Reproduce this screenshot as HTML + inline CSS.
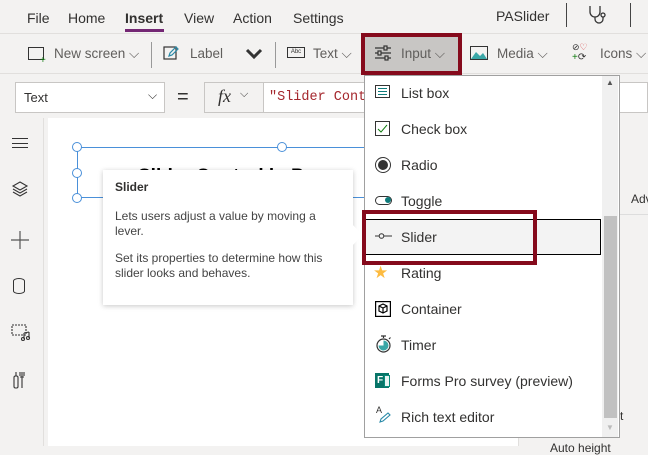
<!DOCTYPE html>
<html><head><meta charset="utf-8"><style>
*{margin:0;padding:0;box-sizing:border-box}
body{width:648px;height:446px;overflow:hidden;position:relative;background:#f3f2f1;font-family:"Liberation Sans",sans-serif;color:#323130}
.a{position:absolute}
.t{position:absolute;font-size:13.5px;white-space:nowrap}
.g{color:#605e5c}
</style></head><body>
<div class="a" style="left:0;top:0;width:648px;height:34px;background:#f3f2f1;border-bottom:1px solid #e1dfdd"></div>
<div class="t" style="left:27px;top:10px;font-size:14px">File</div>
<div class="t" style="left:68px;top:10px;font-size:14px">Home</div>
<div class="t" style="left:125px;top:10px;font-size:14px;font-weight:bold">Insert</div>
<div class="a" style="left:125px;top:29px;width:39px;height:3px;background:#742774"></div>
<div class="t" style="left:184px;top:10px;font-size:14px">View</div>
<div class="t" style="left:233px;top:10px;font-size:14px">Action</div>
<div class="t" style="left:293px;top:10px;font-size:14px">Settings</div>
<div class="t" style="left:496px;top:8px;font-size:14px">PASlider</div>
<div class="a" style="left:566px;top:3px;width:1px;height:24px;background:#444"></div>
<svg class="a" style="left:588px;top:5px" width="22" height="20" viewBox="0 0 22 20" fill="none" stroke="#333" stroke-width="1.3"><path d="M2 1v6a5 5 0 0 0 10 0V1M7 12v2a4 4 0 0 0 8 0v-2"/><circle cx="15" cy="10" r="2"/></svg>
<div class="a" style="left:630px;top:3px;width:1px;height:24px;background:#444"></div>
<div class="a" style="left:0;top:35px;width:648px;height:39px;background:#f3f2f1;border-bottom:1px solid #e1dfdd"></div>
<div class="a" style="left:28px;top:47px;width:16px;height:13px;border:1.3px solid #333"></div>
<div class="t" style="left:40px;top:55px;color:#107c10;font-size:10px">+</div>
<div class="t g" style="left:54px;top:46px">New screen ⌵</div>
<div class="a" style="left:151px;top:42px;width:1px;height:26px;background:#999"></div>
<svg class="a" style="left:163px;top:45px" width="16" height="16" viewBox="0 0 16 16" fill="none" stroke="#333" stroke-width="1.2"><rect x="1" y="2" width="12" height="12"/><path d="M6 11l1-3 6-6 2 2-6 6z" stroke="#2a8aa8"/></svg>
<div class="t g" style="left:190px;top:46px">Label</div>
<svg class="a" style="left:245px;top:48px" width="18" height="12" viewBox="0 0 18 12"><path d="M2 2l7 7 7-7" stroke="#333" stroke-width="3" fill="none"/></svg>
<div class="a" style="left:275px;top:42px;width:1px;height:26px;background:#999"></div>
<div class="a" style="left:287px;top:47px;width:18px;height:11px;border:1px solid #333;font-size:6px;text-align:center;line-height:9px">Abc</div>
<div class="t g" style="left:313px;top:46px">Text ⌵</div>
<div class="a" style="left:361px;top:33px;width:101px;height:42px;background:#c8c6c4;border:4px solid #850a1c"></div>
<svg class="a" style="left:374px;top:45px" width="18" height="16" viewBox="0 0 18 16" stroke="#333" stroke-width="1.2" fill="#c8c6c4"><path d="M1 3h16M1 8h16M1 13h16"/><rect x="10" y="1" width="3" height="4"/><rect x="4" y="6" width="3" height="4"/><rect x="11" y="11" width="3" height="4"/></svg>
<div class="t g" style="left:401px;top:46px">Input ⌵</div>
<svg class="a" style="left:470px;top:46px" width="18" height="14" viewBox="0 0 18 14"><rect x="0.5" y="0.5" width="17" height="13" fill="none" stroke="#333"/><path d="M1 13l5-7 4 4 3-3 4 6z" fill="#3aa7a7"/></svg>
<div class="t g" style="left:497px;top:46px">Media ⌵</div>
<div class="t" style="left:572px;top:42px;font-size:9px;color:#333">⊘<span style="color:#d13438">♡</span></div>
<div class="t" style="left:572px;top:52px;font-size:10px;color:#107c10">+<span style="color:#333">⟳</span></div>
<div class="t g" style="left:600px;top:46px">Icons ⌵</div>
<div class="a" style="left:15px;top:82px;width:150px;height:31px;background:#fff;border:1px solid #c8c6c4"></div>
<div class="t" style="left:24px;top:90px;font-size:13px">Text</div>
<div class="t" style="left:148px;top:88px;font-size:12px">⌵</div>
<div class="t" style="left:177px;top:86px;font-size:20px">=</div>
<div class="a" style="left:204px;top:82px;width:60px;height:31px;background:#f3f2f1;border:1px solid #c8c6c4"></div>
<div class="t" style="left:218px;top:86px;font-family:'Liberation Serif',serif;font-style:italic;font-size:18px">fx</div>
<div class="t" style="left:240px;top:88px;font-size:11px">⌵</div>
<div class="a" style="left:263px;top:82px;width:385px;height:31px;background:#fff;border:1px solid #c8c6c4"></div>
<div class="t" style="left:269px;top:90px;font-family:'Liberation Mono',monospace;font-size:13.5px;color:#a4262c">"Slider Cont</div>
<div class="a" style="left:0;top:118px;width:44px;height:328px;background:#f3f2f1;border-right:1px solid #e1dfdd"></div>
<div class="a" style="left:48px;top:118px;width:470px;height:328px;background:#fff"></div>
<div class="a" style="left:518px;top:118px;width:130px;height:328px;background:#f3f2f1;border-left:1px solid #e1dfdd"></div>
<div class="a" style="left:518px;top:214px;width:130px;height:1px;background:#ddd"></div>
<div class="t" style="left:631px;top:192px;font-size:12px">Adv</div>
<div class="t" style="left:620px;top:409px;font-size:12px">t</div>
<div class="t" style="left:550px;top:441px;font-size:12px">Auto height</div>
<div class="a" style="left:12px;top:138px;width:16px;height:10px;border-top:1px solid #333;border-bottom:1px solid #333"></div>
<div class="a" style="left:12px;top:143px;width:16px;height:1px;background:#333"></div>
<svg class="a" style="left:11px;top:181px" width="18" height="16" viewBox="0 0 18 16" fill="none" stroke="#333" stroke-width="1.1"><path d="M9 1l7 4-7 4-7-4z"/><path d="M2 8l7 4 7-4M2 11l7 4 7-4"/></svg>
<svg class="a" style="left:10px;top:230px" width="20" height="20"><path d="M10 1v18M1 10h18" stroke="#555" stroke-width="1.2"/></svg>
<div class="a" style="left:13px;top:278px;width:12px;height:16px;border:1.2px solid #333;border-radius:6px/3px"></div>
<svg class="a" style="left:11px;top:324px" width="20" height="18" fill="none" stroke="#333" stroke-width="1.1"><rect x="1" y="1" width="14" height="10" stroke-dasharray="2 1"/><path d="M13 9v6M18 8v6M13 9l5-1"/><circle cx="12" cy="15" r="1.5"/><circle cx="17" cy="14" r="1.5"/></svg>
<svg class="a" style="left:13px;top:371px" width="14" height="18" fill="none" stroke="#333" stroke-width="1.1"><rect x="1" y="5" width="4" height="12" rx="1.5"/><path d="M3 1v4M9 1v16M7 6h4M11 1v4M7 1v4"/></svg>
<div class="a" style="left:77px;top:147px;width:300px;height:51px;border:1.3px solid #4a90d9;border-right:none"></div>
<div class="t" style="left:138px;top:166px;font-size:19px;font-weight:bold;color:#000">Slider Control in Power</div>
<div class="a" style="left:72px;top:142px;width:10px;height:10px;border:1.5px solid #4a90d9;border-radius:50%;background:#fff"></div>
<div class="a" style="left:277px;top:142px;width:10px;height:10px;border:1.5px solid #4a90d9;border-radius:50%;background:#fff"></div>
<div class="a" style="left:72px;top:168px;width:10px;height:10px;border:1.5px solid #4a90d9;border-radius:50%;background:#fff"></div>
<div class="a" style="left:72px;top:193px;width:10px;height:10px;border:1.5px solid #4a90d9;border-radius:50%;background:#fff"></div>
<div class="a" style="left:103px;top:170px;width:250px;height:135px;background:#fff;box-shadow:0 1px 5px rgba(0,0,0,.22)"></div>
<div class="a" style="left:346px;top:228px;width:14px;height:14px;background:#fff;transform:rotate(45deg)"></div>
<div class="t" style="left:115px;top:180px;font-size:12px;font-weight:bold">Slider</div>
<div class="a" style="left:115px;top:209px;width:225px;font-size:12px;line-height:15px;color:#444">Lets users adjust a value by moving a lever.</div>
<div class="a" style="left:115px;top:251px;width:225px;font-size:12px;line-height:15px;color:#444">Set its properties to determine how this slider looks and behaves.</div>
<div class="a" style="left:364px;top:75px;width:256px;height:363px;background:#fff;border:1px solid #a0a0a0"></div>
<div class="a" style="left:602px;top:76px;width:16px;height:361px;background:#f0f0f0"></div>
<div class="a" style="left:604px;top:216px;width:13px;height:202px;background:#c1c1c1"></div>
<div class="t" style="left:606px;top:78px;font-size:8px;color:#555">▲</div>
<div class="t" style="left:606px;top:423px;font-size:8px;color:#bbb">▼</div>
<div class="a" style="left:364px;top:219px;width:237px;height:36px;background:#f3f3f3;border:1px solid #000"></div>
<div class="a" style="left:362px;top:210px;width:175px;height:55px;border:4px solid #850a1c"></div>
<div class="a" style="left:375px;top:85px;width:15px;height:13px;border:1.3px solid #333"></div>
<div class="a" style="left:378px;top:88px;width:9px;height:7px;border-top:1px solid #0f7b7b;border-bottom:1px solid #0f7b7b"></div>
<div class="a" style="left:378px;top:91px;width:9px;height:1px;background:#0f7b7b"></div>
<div class="a" style="left:375px;top:121px;width:15px;height:15px;border:1px solid #333"></div>
<svg class="a" style="left:377px;top:123px" width="11" height="11"><path d="M1 6l3 3 6-7" stroke="#107c10" fill="none"/></svg>
<div class="a" style="left:375px;top:157px;width:16px;height:16px;border:1.3px solid #333;border-radius:50%"></div>
<div class="a" style="left:378px;top:160px;width:10px;height:10px;background:#333;border-radius:50%"></div>
<div class="a" style="left:375px;top:196px;width:17px;height:9px;border:1.2px solid #333;border-radius:5px"></div>
<div class="a" style="left:385px;top:197px;width:6px;height:6px;background:#0f7b7b;border-radius:50%"></div>
<svg class="a" style="left:374px;top:232px" width="18" height="8"><path d="M1 4h4M10 4h8" stroke="#333"/><circle cx="7.5" cy="4" r="2.3" fill="none" stroke="#333"/></svg>
<div class="t" style="left:373px;top:263px;font-size:17px;color:#fdbb40">★</div>
<svg class="a" style="left:375px;top:301px" width="16" height="16" fill="none" stroke="#000" stroke-width="1.2"><rect x="0.6" y="0.6" width="14.8" height="14.8"/><path d="M8 3l4 2v5l-4 2-4-2V5z M4 5l4 2 4-2M8 7v5"/></svg>
<svg class="a" style="left:375px;top:335px" width="17" height="18"><path d="M6 1h5M8.5 1v2M14 4l1.5-1.5" stroke="#333" stroke-width="1.2"/><circle cx="8.5" cy="10.5" r="6.5" fill="#fff" stroke="#333" stroke-width="1.2"/><path d="M8.5 10.5V5.5A5 5 0 1 1 3.5 10.5z" fill="#3aa7a7"/></svg>
<div class="a" style="left:375px;top:373px;width:14px;height:15px;background:#077568;color:#fff;font-size:10px;font-weight:bold;line-height:15px;padding-left:2px">F</div>
<div class="a" style="left:384px;top:375px;width:6px;height:12px;border:1px solid #0a8a7a;background:#e8f5f3"></div>
<div class="t" style="left:376px;top:405px;font-size:9px">A</div>
<svg class="a" style="left:378px;top:412px" width="14" height="12"><path d="M2 10l1-3 7-6 2 2-7 6z" fill="none" stroke="#2a8aa8" stroke-width="1.1"/></svg>
<div class="t" style="left:401px;top:85px;font-size:14px">List box</div>
<div class="t" style="left:401px;top:121px;font-size:14px">Check box</div>
<div class="t" style="left:401px;top:157px;font-size:14px">Radio</div>
<div class="t" style="left:401px;top:193px;font-size:14px">Toggle</div>
<div class="t" style="left:401px;top:229px;font-size:14px">Slider</div>
<div class="t" style="left:401px;top:265px;font-size:14px">Rating</div>
<div class="t" style="left:401px;top:301px;font-size:14px">Container</div>
<div class="t" style="left:401px;top:337px;font-size:14px">Timer</div>
<div class="t" style="left:401px;top:373px;font-size:14px">Forms Pro survey (preview)</div>
<div class="t" style="left:401px;top:409px;font-size:14px">Rich text editor</div>
</body></html>
